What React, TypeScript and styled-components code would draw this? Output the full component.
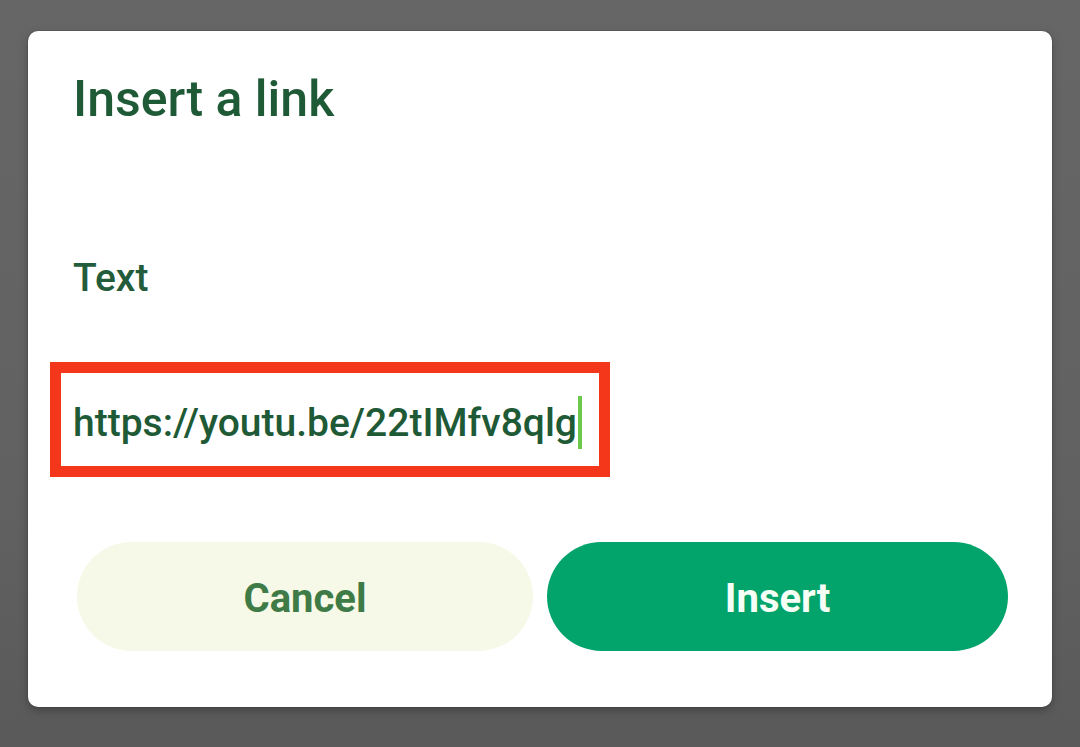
import React from "react";
import styled, { createGlobalStyle } from "styled-components";

const Global = createGlobalStyle`
  html, body { margin: 0; padding: 0; }
  body {
    width: 1080px;
    height: 747px;
    overflow: hidden;
    background: linear-gradient(#666666 0%, #626262 60%, #5a5a5a 100%);
    font-family: Roboto, "Noto Sans", Arial, sans-serif;
  }
`;

const Screen = styled.div`
  width: 1080px;
  height: 747px;
  box-sizing: border-box;
  padding: 31px 28px 0 28px;
`;

const Dialog = styled.div`
  width: 1024px;
  height: 676px;
  box-sizing: border-box;
  background: #ffffff;
  border-radius: 10px;
  box-shadow: 0 0 0 1px rgba(0, 0, 0, 0.08), 0 4px 10px rgba(0, 0, 0, 0.25);
  padding: 38px 44px 0 22px;
  display: flex;
  flex-direction: column;
`;

const Title = styled.h1`
  margin: 0 0 0 23px;
  font-size: 50px;
  line-height: 60px;
  font-weight: 500;
  color: #1f5a36;
  letter-spacing: 0;
`;

const Label = styled.div`
  margin: 125px 0 0 23px;
  font-size: 39px;
  line-height: 48px;
  font-weight: 500;
  color: #235c3b;
`;

const Field = styled.div`
  margin-top: 60px;
  width: 560px;
  height: 115px;
  box-sizing: border-box;
  border: 11px solid #f4361a;
  padding: 6px 0 0 12px;
  display: flex;
  align-items: center;
`;

const FieldText = styled.span`
  font-size: 39px;
  line-height: 48px;
  font-weight: 500;
  color: #1f5a36;
  white-space: nowrap;
`;

const Caret = styled.span`
  display: inline-block;
  width: 4px;
  height: 53px;
  margin-left: 1px;
  background: #6cc94b;
  align-self: center;
`;

const ButtonRow = styled.div`
  margin: 65px 0 0 27px;
  display: grid;
  grid-template-columns: 456px 461px;
  column-gap: 14px;
`;

const Button = styled.button<{ $primary?: boolean }>`
  height: 109px;
  border: none;
  border-radius: 55px;
  background: ${(p) => (p.$primary ? "#03a46b" : "#f6f9e7")};
  color: ${(p) => (p.$primary ? "#f5fff6" : "#3f7b46")};
  font-family: Roboto, "Noto Sans", Arial, sans-serif;
  font-size: 40px;
  font-weight: 700;
  padding: 4px 0 0 0;
  cursor: pointer;
`;

export default function App() {
  return (
    <>
      <Global />
      <Screen>
        <Dialog>
          <Title>Insert a link</Title>
          <Label>Text</Label>
          <Field>
            <FieldText>https://youtu.be/22tIMfv8qlg</FieldText>
            <Caret />
          </Field>
          <ButtonRow>
            <Button>Cancel</Button>
            <Button $primary>Insert</Button>
          </ButtonRow>
        </Dialog>
      </Screen>
    </>
  );
}
